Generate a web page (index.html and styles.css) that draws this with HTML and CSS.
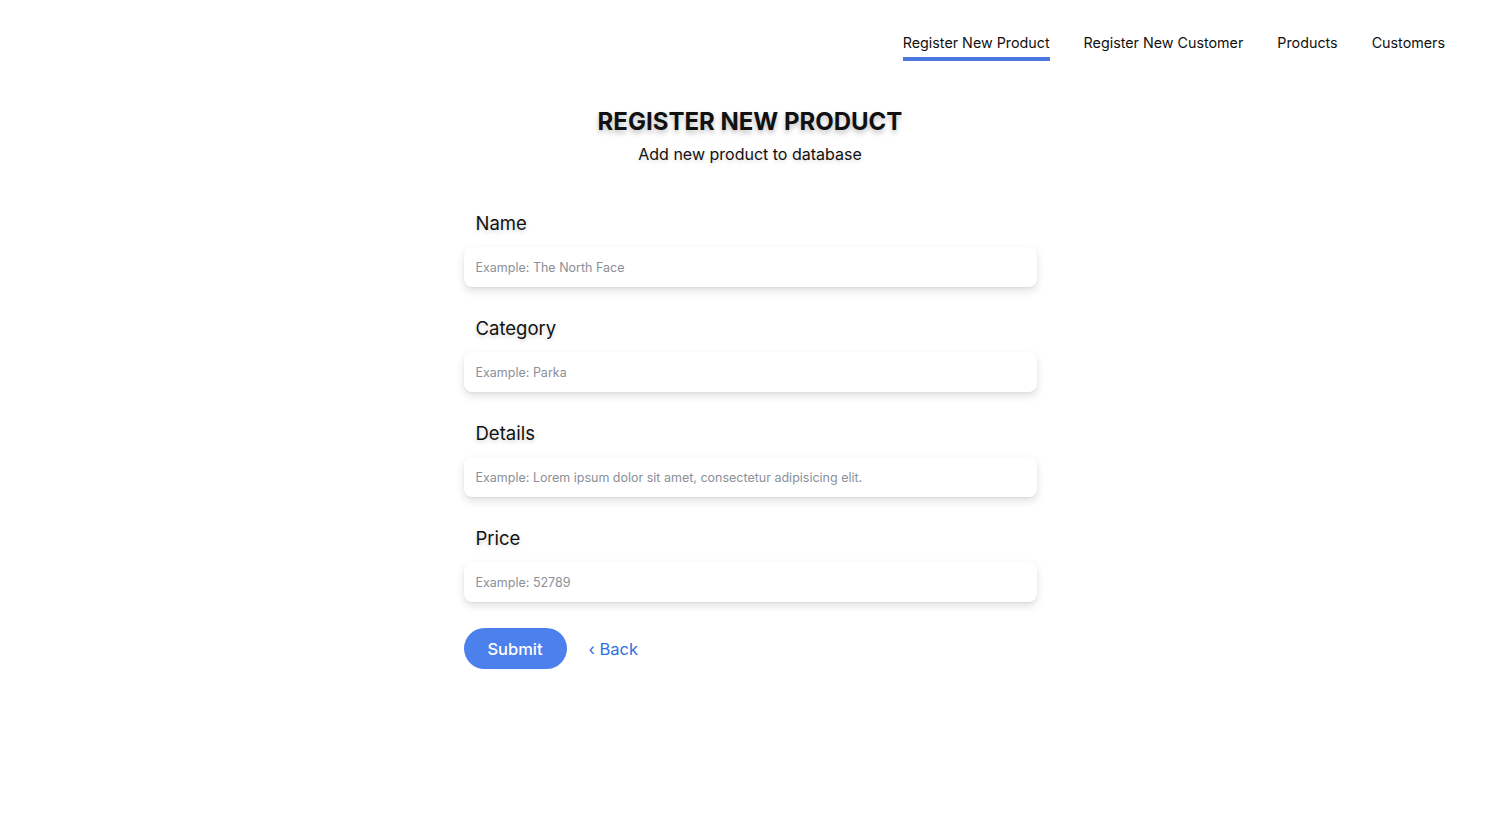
FILE: index.html
```html
<!DOCTYPE html>
<html lang="en">
<head>
<meta charset="utf-8">
<title>Register New Product</title>
<link rel="stylesheet" href="styles.css">
</head>
<body>
  <nav class="topnav">
    <a class="nav-link active" href="#">Register New Product</a>
    <a class="nav-link" href="#">Register New Customer</a>
    <a class="nav-link" href="#">Products</a>
    <a class="nav-link" href="#">Customers</a>
  </nav>

  <main class="page">
    <header class="page-head">
      <h1 class="page-title">REGISTER NEW PRODUCT</h1>
      <p class="page-sub">Add new product to database</p>
    </header>

    <form class="form">
      <div class="field">
        <label class="field-label" for="name">Name</label>
        <input class="field-input" id="name" type="text" placeholder="Example: The North Face">
      </div>
      <div class="field">
        <label class="field-label" for="category">Category</label>
        <input class="field-input" id="category" type="text" placeholder="Example: Parka">
      </div>
      <div class="field">
        <label class="field-label" for="details">Details</label>
        <input class="field-input" id="details" type="text" placeholder="Example: Lorem ipsum dolor sit amet, consectetur adipisicing elit.">
      </div>
      <div class="field">
        <label class="field-label" for="price">Price</label>
        <input class="field-input" id="price" type="text" placeholder="Example: 52789">
      </div>
      <div class="actions">
        <button class="btn-submit" type="submit">Submit</button>
        <a class="back-link" href="#">&lsaquo; Back</a>
      </div>
    </form>
  </main>
</body>
</html>
```

FILE: styles.css
```css
* { box-sizing: border-box; }

html, body {
  margin: 0;
  padding: 0;
  background: #ffffff;
  color: #111111;
  font-family: Inter, "Noto Sans", "Liberation Sans", sans-serif;
}

.topnav {
  display: flex;
  justify-content: flex-end;
  gap: 34px;
  padding: 34px 55px 0 0;
}

.nav-link {
  font-size: 14.3px;
  color: #111111;
  text-decoration: none;
  padding-bottom: 6px;
  border-bottom: 4px solid transparent;
}

.nav-link.active {
  border-bottom-color: #4c79e0;
}

.page {
  display: flex;
  flex-direction: column;
  align-items: center;
}

.page-head {
  text-align: center;
  margin-top: 45px;
}

.page-title {
  margin: 0;
  font-size: 24px;
  font-weight: 700;
  letter-spacing: 0;
  color: #111111;
  text-shadow: 0 3px 5px rgba(0, 0, 0, 0.25);
  line-height: 32px;
}

.page-sub {
  margin: 6px 0 0;
  font-size: 16px;
  color: #111111;
  text-shadow: 0 2px 4px rgba(0, 0, 0, 0.15);
}

.form {
  width: 573px;
  margin-top: 35px;
  display: flex;
  flex-direction: column;
}

.field {
  display: flex;
  flex-direction: column;
  margin-bottom: 17px;
}

.field-label {
  padding-left: 12px;
  font-size: 18.5px;
  line-height: 24px;
  height: 48px;
  padding-top: 12px;
  color: #111111;
  text-shadow: 0 2px 4px rgba(0, 0, 0, 0.18);
}

.field-input {
  height: 40px;
  border: none;
  border-radius: 8px;
  padding: 0 12px;
  font-family: inherit;
  font-size: 12.5px;
  color: #333333;
  background: #ffffff;
  box-shadow: 0 4px 8px rgba(0, 0, 0, 0.12), 0 1px 2px rgba(0, 0, 0, 0.05);
  outline: none;
}

.field-input::placeholder {
  color: #8a8f99;
}

.actions {
  display: flex;
  align-items: center;
  gap: 22px;
  margin-top: 9px;
}

.btn-submit {
  width: 103px;
  height: 41px;
  border: none;
  border-radius: 21px;
  background: #4c80ec;
  color: #ffffff;
  font-family: inherit;
  font-size: 16.5px;
  font-weight: 500;
  cursor: pointer;
}

.back-link {
  color: #2f6fe4;
  font-size: 16.5px;
  text-decoration: none;
}
```
